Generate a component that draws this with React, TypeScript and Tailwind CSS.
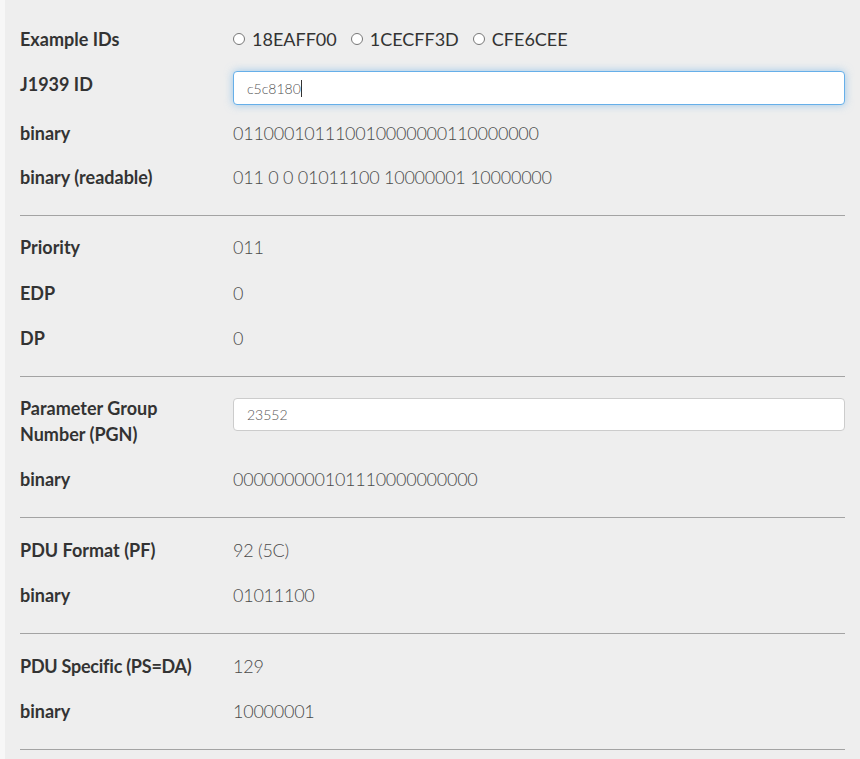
import React from 'react';

const labelCls = 'w-[213px] shrink-0 text-[18px] leading-[26px] font-bold text-[#333]';
const valueCls = 'text-[18px] leading-[26px] font-light tracking-[-0.25px] text-[#4a4a4a]';

const Row: React.FC<{ label: React.ReactNode; className?: string; children: React.ReactNode }> = ({
  label,
  className = '',
  children,
}) => (
  <div className={`flex items-start ${className}`}>
    <div className={labelCls}>{label}</div>
    <div className="flex-1 min-w-0">{children}</div>
  </div>
);

const Divider: React.FC<{ className?: string }> = ({ className = '' }) => (
  <div className={`h-px bg-[#a3a3a3] ${className}`} />
);

const App: React.FC = () => {
  const examples = ['18EAFF00', '1CECFF3D', 'CFE6CEE'];

  return (
    <div className="min-h-[759px] bg-[#f7f7f7] pl-[5px]" style={{ fontFamily: 'Lato, "Noto Sans", sans-serif' }}>
      <div className="min-h-[759px] bg-[#eeeeee] px-[15px] pt-[26px] pb-[9px]">
        {/* identifier */}
        <Row label="Example IDs">
          <div className="flex items-center gap-[14px] text-[18px] leading-[26px] text-[#333]">
            {examples.map((id) => (
              <label key={id} className="flex items-center gap-[7px]">
                <input type="radio" name="example" className="w-[12px] h-[12px] m-0" />
                <span>{id}</span>
              </label>
            ))}
          </div>
        </Row>

        <Row label="J1939 ID" className="mt-[19px]">
          <div className="h-[34px] flex items-center rounded-[4px] border border-[#66afe9] bg-white px-[13px] shadow-[0_0_8px_rgba(102,175,233,0.6)] text-[14px] font-light text-[#555]">
            <span>c5c8180</span>
            <span className="inline-block w-px h-[17px] bg-[#333]" />
          </div>
        </Row>

        <Row label="binary" className="mt-[15px]">
          <div className={valueCls}>011000101110010000000110000000</div>
        </Row>

        <Row label="binary (readable)" className="mt-[18px]">
          <div className={valueCls}>011 0 0 01011100 10000001 10000000</div>
        </Row>

        <Divider className="mt-[25px]" />

        {/* priority */}
        <Row label="Priority" className="mt-[18px]">
          <div className={valueCls}>011</div>
        </Row>
        <Row label="EDP" className="mt-[20px]">
          <div className={valueCls}>0</div>
        </Row>
        <Row label="DP" className="mt-[19px]">
          <div className={valueCls}>0</div>
        </Row>

        <Divider className="mt-[25px]" />

        {/* pgn */}
        <Row label={<>Parameter Group<br />Number (PGN)</>} className="mt-[18px]">
          <div className="mt-[3px] h-[33px] flex items-center rounded-[4px] border border-[#cccccc] bg-white px-[13px] text-[14px] font-light text-[#555]">
            23552
          </div>
        </Row>
        <Row label="binary" className="mt-[19px]">
          <div className={valueCls}>000000000101110000000000</div>
        </Row>

        <Divider className="mt-[25px]" />

        {/* pdu format */}
        <Row label="PDU Format (PF)" className="mt-[19px]">
          <div className={valueCls}>92 (5C)</div>
        </Row>
        <Row label="binary" className="mt-[19px]">
          <div className={valueCls}>01011100</div>
        </Row>

        <Divider className="mt-[25px]" />

        {/* pdu specific */}
        <Row label={<span className="tracking-[-0.25px]">PDU Specific (PS=DA)</span>} className="mt-[19px]">
          <div className={valueCls}>129</div>
        </Row>
        <Row label="binary" className="mt-[19px]">
          <div className={valueCls}>10000001</div>
        </Row>

        <Divider className="mt-[25px]" />
      </div>
    </div>
  );
};

export default App;
